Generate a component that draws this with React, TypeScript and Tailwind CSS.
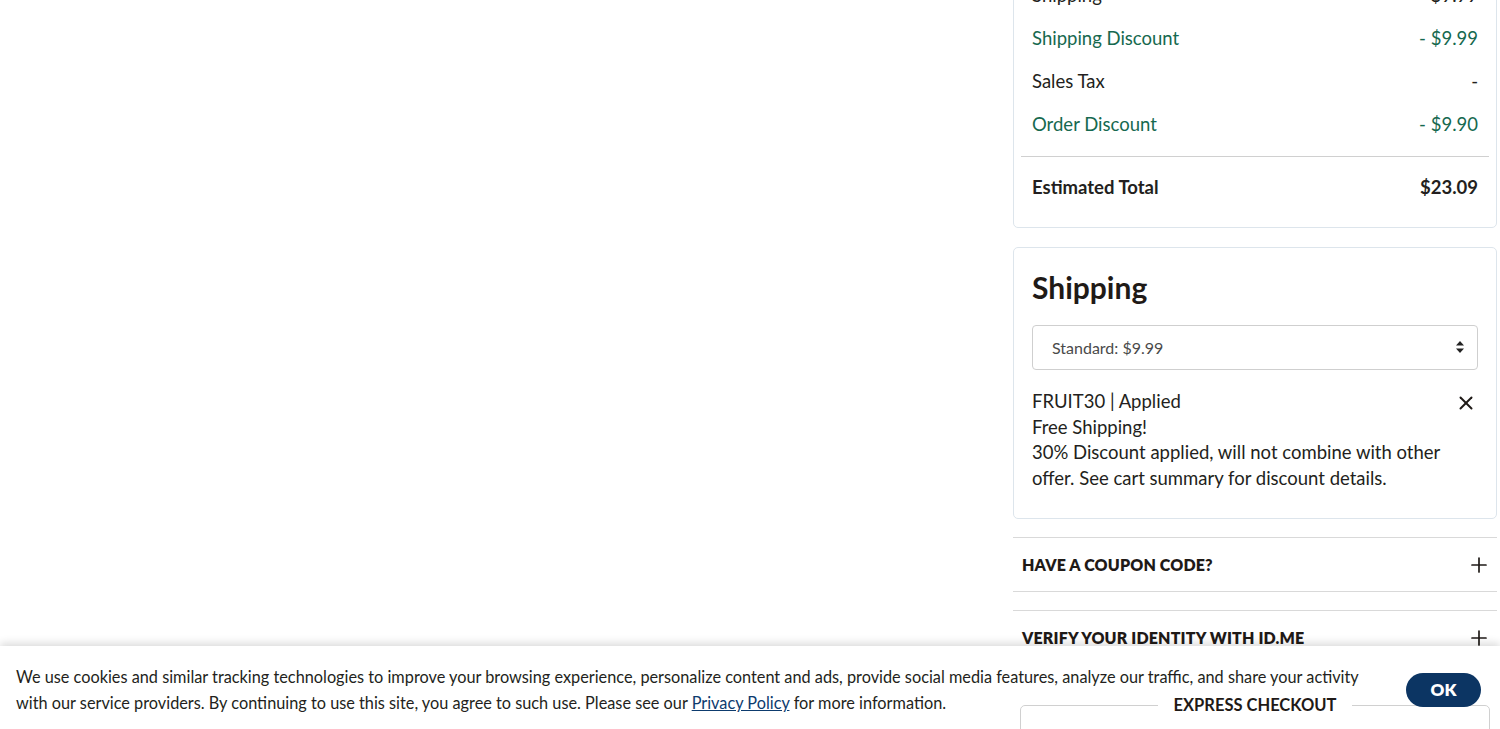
import { Plus, X } from "lucide-react";

const font = { fontFamily: '"Lato", "Noto Sans", sans-serif' };

interface SummaryRow {
  label: string;
  value: string;
  green?: boolean;
}

const rows: SummaryRow[] = [
  { label: "Shipping", value: "$9.99" },
  { label: "Shipping Discount", value: "- $9.99", green: true },
  { label: "Sales Tax", value: "-" },
  { label: "Order Discount", value: "- $9.90", green: true },
];

function SelectArrows() {
  return (
    <svg width="10" height="14" viewBox="0 0 10 14" className="text-[#222]">
      <path d="M5 1 L9 5.5 H1 Z" fill="currentColor" />
      <path d="M5 13 L9 8.5 H1 Z" fill="currentColor" />
    </svg>
  );
}

function AccordionItem({ title }: { title: string }) {
  return (
    <div className="flex h-[55px] items-center justify-between border-y border-[#d9d9d9] pl-[9px] pr-[6px]">
      <span className="text-[16px] font-extrabold uppercase tracking-[0.01em] text-[#1f1a17]">{title}</span>
      <Plus size={24} strokeWidth={1.7} className="text-[#1f1a17]" />
    </div>
  );
}

export default function App() {
  return (
    <div className="relative h-[729px] w-full overflow-hidden bg-white" style={font}>
      <div className="flex justify-end">
        <div className="mr-[3px] mt-[-40px] flex w-[484px] flex-col">
          {/* Order summary */}
          <div className="rounded-[5px] border border-[#dde5ec] px-[7px] pb-[18px] pt-[13px]">
            {rows.map((r) => (
              <div
                key={r.label}
                className={`flex h-[43px] items-center justify-between px-[11px] text-[18.5px] ${
                  r.green ? "text-[#16694f]" : "text-[#231f20]"
                }`}
              >
                <span>{r.label}</span>
                <span>{r.value}</span>
              </div>
            ))}
            <div className="mt-[10px] border-t border-[#d0d0d0]" />
            <div className="mt-[9px] flex h-[43px] items-center justify-between px-[11px] text-[18.5px] font-bold text-[#231f20]">
              <span>Estimated Total</span>
              <span>$23.09</span>
            </div>
          </div>

          {/* Shipping */}
          <div className="mt-[19px] rounded-[5px] border border-[#dde5ec] px-[18px] pb-[27px] pt-[22px]">
            <h2 className="text-[30px] font-bold leading-[34px] text-[#1f1a17]">Shipping</h2>
            <div className="relative mt-[21px]">
              <select
                className="h-[45px] w-full appearance-none rounded-[4px] border border-[#cfcfcf] bg-white pl-[19px] text-[16px] text-[#4a4a4a] outline-none"
                style={font}
                defaultValue="standard"
              >
                <option value="standard">Standard: $9.99</option>
              </select>
              <div className="pointer-events-none absolute right-[13px] top-[15px]">
                <SelectArrows />
              </div>
            </div>
            <div className="mt-[19px] flex items-start justify-between">
              <div className="text-[18.5px] leading-[25.5px] text-[#231f20]">
                <p>FRUIT30 | Applied</p>
                <p>Free Shipping!</p>
                <p className="w-[420px]">
                  30% Discount applied, will not combine with other offer. See cart summary for discount details.
                </p>
              </div>
              <X size={22} strokeWidth={2.2} className="mr-[1px] mt-[3px] text-[#1f1a17]" />
            </div>
          </div>

          {/* Accordions */}
          <div className="mt-[18px]">
            <AccordionItem title="Have a coupon code?" />
          </div>
          <div className="mt-[18px]">
            <AccordionItem title="Verify your identity with ID.me" />
          </div>

          {/* Express checkout */}
          <fieldset className="relative z-20 mx-[7px] mt-[28px] h-[120px] rounded-[5px] border border-[#d0d0d0] bg-white">
            <legend className="mx-auto px-[16px] text-[16.5px] font-bold text-[#1f1a17]">EXPRESS CHECKOUT</legend>
          </fieldset>
        </div>
      </div>

      {/* Cookie banner */}
      <div className="absolute bottom-0 left-0 right-0 h-[83px] bg-white shadow-[0_-3px_8px_rgba(0,0,0,0.14)]">
        <div className="flex items-start justify-between pl-[16px] pr-[19px] pt-[18px]">
          <p className="w-[1375px] text-[16.3px] leading-[26px] text-[#231f20]">
            We use cookies and similar tracking technologies to improve your browsing experience, personalize content and
            ads, provide social media features, analyze our traffic, and share your activity
            <br />
            with our service providers. By continuing to use this site, you agree to such use. Please see our{" "}
            <a href="#" className="text-[#0d3b6e] underline">
              Privacy Policy
            </a>{" "}
            for more information.
          </p>
          <button className="relative z-30 mt-[9px] h-[34px] w-[75px] rounded-full bg-[#0c3563] text-[17px] font-extrabold text-white">
            OK
          </button>
        </div>
      </div>
    </div>
  );
}
